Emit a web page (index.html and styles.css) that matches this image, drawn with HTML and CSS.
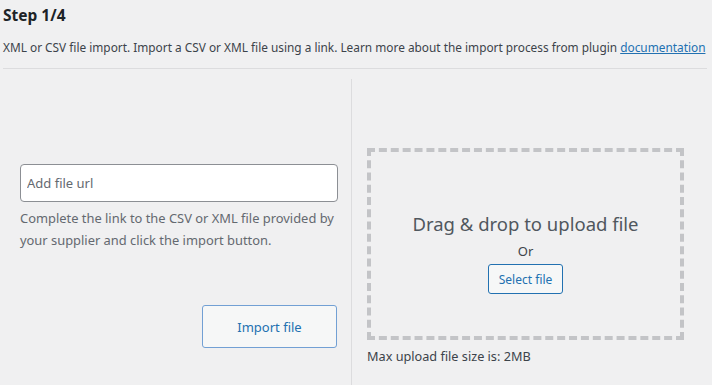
FILE: index.html
```html
<!DOCTYPE html>
<html>
<head>
<meta charset="utf-8">
<link rel="stylesheet" href="styles.css">
</head>
<body>
<div class="page">
  <h2 class="title">Step 1/4</h2>
  <p class="intro">XML or CSV file import. Import a CSV or XML file using a link. Learn more about the import process from plugin <a href="#">documentation</a></p>
  <div class="sep"></div>
  <div class="cols">
    <div class="left">
      <input class="url" type="text" placeholder="Add file url">
      <p class="help">Complete the link to the CSV or XML file provided by your supplier and click the import button.</p>
      <div class="actions"><button class="btn btn-import">Import file</button></div>
    </div>
    <div class="right">
      <div class="drop">
        <div class="drop-title">Drag &amp; drop to upload file</div>
        <div class="drop-or">Or</div>
        <button class="btn btn-select">Select file</button>
      </div>
      <p class="max">Max upload file size is: 2MB</p>
    </div>
  </div>
</div>
</body>
</html>
```
FILE: styles.css
```css
html, body {
  margin: 0;
  padding: 0;
  background: #f0f0f1;
}
body {
  font-family: "Noto Sans", "Open Sans", sans-serif;
  font-size: 13px;
  color: #3c434a;
}
.page {
  width: 712px;
  height: 385px;
  overflow: hidden;
}
.title {
  margin: 0;
  padding: 4px 0 0 3px;
  font-size: 15.5px;
  font-weight: 700;
  line-height: 22px;
  color: #1d2327;
}
.intro {
  margin: 11px 0 0 3px;
  line-height: 20px;
  font-size: 11.85px;
  white-space: nowrap;
}
.intro a {
  color: #2271b1;
}
.sep {
  margin: 11px 5px 0 3px;
  height: 1px;
  background: #dcdcde;
}
.cols {
  display: grid;
  grid-template-columns: 352px 1fr;
  margin-top: 10px;
  height: 320px;
}
.left {
  border-right: 1px solid #dcdcde;
  padding: 85px 14px 0 20px;
  display: flex;
  flex-direction: column;
}
.url {
  box-sizing: border-box;
  width: 318px;
  height: 38px;
  margin: 0;
  border: 1px solid #8c8f94;
  border-radius: 4px;
  background: #fff;
  padding: 0 6px;
  font-family: inherit;
  font-size: 13px;
  color: #2c3338;
}
.url::placeholder {
  color: #646970;
}
.help {
  margin: 5px 0 0 0;
  line-height: 22px;
  color: #646970;
  font-size: 12.9px;
}
.actions {
  display: flex;
  justify-content: flex-end;
  margin-top: 54px;
  padding-right: 0;
}
.btn {
  box-sizing: border-box;
  font-family: inherit;
  font-size: 13px;
  color: #2271b1;
  background: #f6f7f7;
  border: 1px solid #2271b1;
  border-radius: 3px;
  cursor: pointer;
}
.btn-import {
  width: 135px;
  height: 43px;
  border-color: #72a0d4;
}
.right {
  padding: 69px 0 0 15px;
}
.drop {
  box-sizing: border-box;
  width: 317px;
  height: 192px;
  border: 4px dashed #c3c4c7;
  display: flex;
  flex-direction: column;
  align-items: center;
  padding-top: 60px;
}
.drop-title {
  font-size: 18.5px;
  line-height: 24px;
  color: #50575e;
}
.drop-or {
  margin-top: 6px;
  line-height: 18px;
  color: #3c434a;
}
.btn-select {
  margin-top: 4px;
  width: 75px;
  height: 30px;
  font-size: 12px;
}
.max {
  margin: 6px 0 0 0;
  line-height: 20px;
  font-size: 12.7px;
}
```
